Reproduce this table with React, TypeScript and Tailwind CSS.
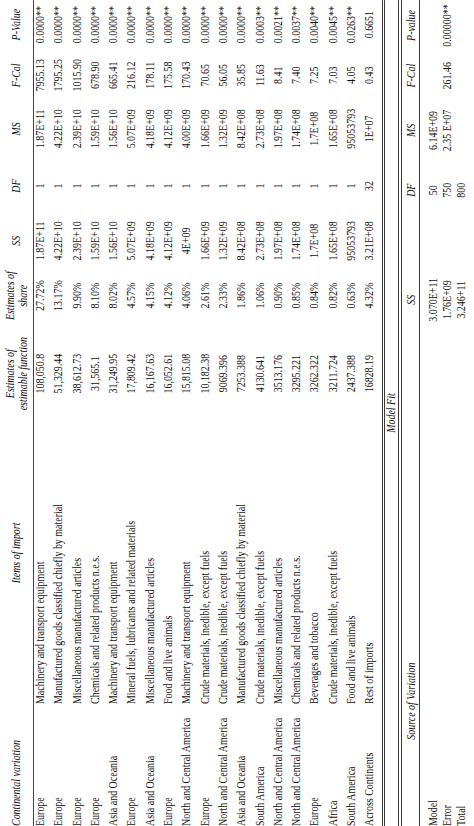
const rows: string[][] = [
  ['Europe', 'Machinery and transport equipment', '108,050.8', '27.72%', '1.87E+11', '1', '1.87E+11', '7955.13', '0.0000**'],
  ['Europe', 'Manufactured goods classified chiefly by material', '51,329.44', '13.17%', '4.22E+10', '1', '4.22E+10', '1795.25', '0.0000**'],
  ['Europe', 'Miscellaneous manufactured articles', '38,612.73', '9.90%', '2.39E+10', '1', '2.39E+10', '1015.90', '0.0000**'],
  ['Europe', 'Chemicals and related products n.e.s.', '31,565.1', '8.10%', '1.59E+10', '1', '1.59E+10', '678.90', '0.0000**'],
  ['Asia and Oceania', 'Machinery and transport equipment', '31,249.95', '8.02%', '1.56E+10', '1', '1.56E+10', '665.41', '0.0000**'],
  ['Europe', 'Mineral fuels, lubricants and related materials', '17,809.42', '4.57%', '5.07E+09', '1', '5.07E+09', '216.12', '0.0000**'],
  ['Asia and Oceania', 'Miscellaneous manufactured articles', '16,167.63', '4.15%', '4.18E+09', '1', '4.18E+09', '178.11', '0.0000**'],
  ['Europe', 'Food and live animals', '16,052.61', '4.12%', '4.12E+09', '1', '4.12E+09', '175.58', '0.0000**'],
  ['North and Central America', 'Machinery and transport equipment', '15,815.08', '4.06%', '4E+09', '1', '4.00E+09', '170.43', '0.0000**'],
  ['Europe', 'Crude materials, inedible, except fuels', '10,182.38', '2.61%', '1.66E+09', '1', '1.66E+09', '70.65', '0.0000**'],
  ['North and Central America', 'Crude materials, inedible, except fuels', '9069.396', '2.33%', '1.32E+09', '1', '1.32E+09', '56.05', '0.0000**'],
  ['Asia and Oceania', 'Manufactured goods classified chiefly by material', '7253.388', '1.86%', '8.42E+08', '1', '8.42E+08', '35.85', '0.0000**'],
  ['South America', 'Crude materials, inedible, except fuels', '4130.641', '1.06%', '2.73E+08', '1', '2.73E+08', '11.63', '0.0003**'],
  ['North and Central America', 'Miscellaneous manufactured articles', '3513.176', '0.90%', '1.97E+08', '1', '1.97E+08', '8.41', '0.0021**'],
  ['North and Central America', 'Chemicals and related products n.e.s.', '3295.221', '0.85%', '1.74E+08', '1', '1.74E+08', '7.40', '0.0037**'],
  ['Europe', 'Beverages and tobacco', '3262.322', '0.84%', '1.7E+08', '1', '1.7E+08', '7.25', '0.0040**'],
  ['Africa', 'Crude materials, inedible, except fuels', '3211.724', '0.82%', '1.65E+08', '1', '1.65E+08', '7.03', '0.0045**'],
  ['South America', 'Food and live animals', '2437.388', '0.63%', '95053793', '1', '95053793', '4.05', '0.0263**'],
  ['Across Continents', 'Rest of imports', '16828.19', '4.32%', '3.21E+08', '32', '1E+07', '0.43', '0.6651'],
];

const fit: string[][] = [
  ['Model', '3.070E+11', '', '50', '6.14E+09', '', ''],
  ['Error', '1.76E+09', '', '750', '2.35 E+07', '261.46', '0.00000**'],
  ['Total', '3.246+11', '', '800', '', '', ''],
];

// the table is laid out upright, then squeezed a little and turned on its side
const mainCols = 'grid grid-cols-[147px_340px_116px_72px_60px_72px_66px_63px_59px]';
const fitCols = 'grid grid-cols-[592px_84px_54px_72px_72px_60px_61px]';

function DoubleRule() {
  return (
    <div className="flex flex-col gap-[1.5px]">
      <div className="h-px bg-[#3a3a3a]" />
      <div className="h-px bg-[#3a3a3a]" />
    </div>
  );
}

export default function App() {
  return (
    <div className="w-[474px] h-[826px] overflow-hidden bg-white">
      <div className="w-[995px] h-[474px] origin-top-left -rotate-90 translate-y-[826px] scale-x-[0.83] bg-white font-['Liberation_Serif','Times_New_Roman',serif] text-[12px] text-[#111]">
        {/* header */}
        <div className={`${mainCols} h-[34px] border-b-[1.5px] border-[#444] italic leading-[12.5px]`}>
          <div className="flex items-center">Continental variation</div>
          <div className="flex items-center justify-center pl-[24px]">Items of import</div>
          <div className="flex flex-col items-center justify-center">
            <span>Estimates of</span>
            <span>estimable function</span>
          </div>
          <div className="flex flex-col items-center justify-center">
            <span>Estimates of</span>
            <span>share</span>
          </div>
          <div className="flex items-center justify-center">SS</div>
          <div className="flex items-center justify-center">DF</div>
          <div className="flex items-center justify-center">MS</div>
          <div className="flex items-center justify-center">F-Cal</div>
          <div className="flex items-center justify-center">P-Value</div>
        </div>

        {/* data rows */}
        {rows.map((r, i) => (
          <div key={i} className={`${mainCols} h-[18.3px] leading-[13px]`}>
            {r.map((c, j) => (
              <div key={j} className={j < 2 ? 'whitespace-nowrap' : 'text-center whitespace-nowrap'}>
                {c}
              </div>
            ))}
          </div>
        ))}

        <DoubleRule />
        <div className="h-[13px] leading-[13px] text-center italic">Model Fit</div>
        <DoubleRule />

        <div className={`${fitCols} h-[18px] items-center italic border-b border-[#3a3a3a]`}>
          <div className="pl-[104px]">Source of Variation</div>
          <div className="text-center">SS</div>
          <div />
          <div className="text-center">DF</div>
          <div className="text-center">MS</div>
          <div className="text-center">F-Cal</div>
          <div className="text-center">P-value</div>
        </div>

        <div className="pt-[6px]">
          {fit.map((r, i) => (
            <div key={i} className={`${fitCols} h-[14px] leading-[14px]`}>
              {r.map((c, j) => (
                <div key={j} className={j === 0 ? '' : 'text-center whitespace-nowrap'}>
                  {c}
                </div>
              ))}
            </div>
          ))}
        </div>
      </div>
    </div>
  );
}
